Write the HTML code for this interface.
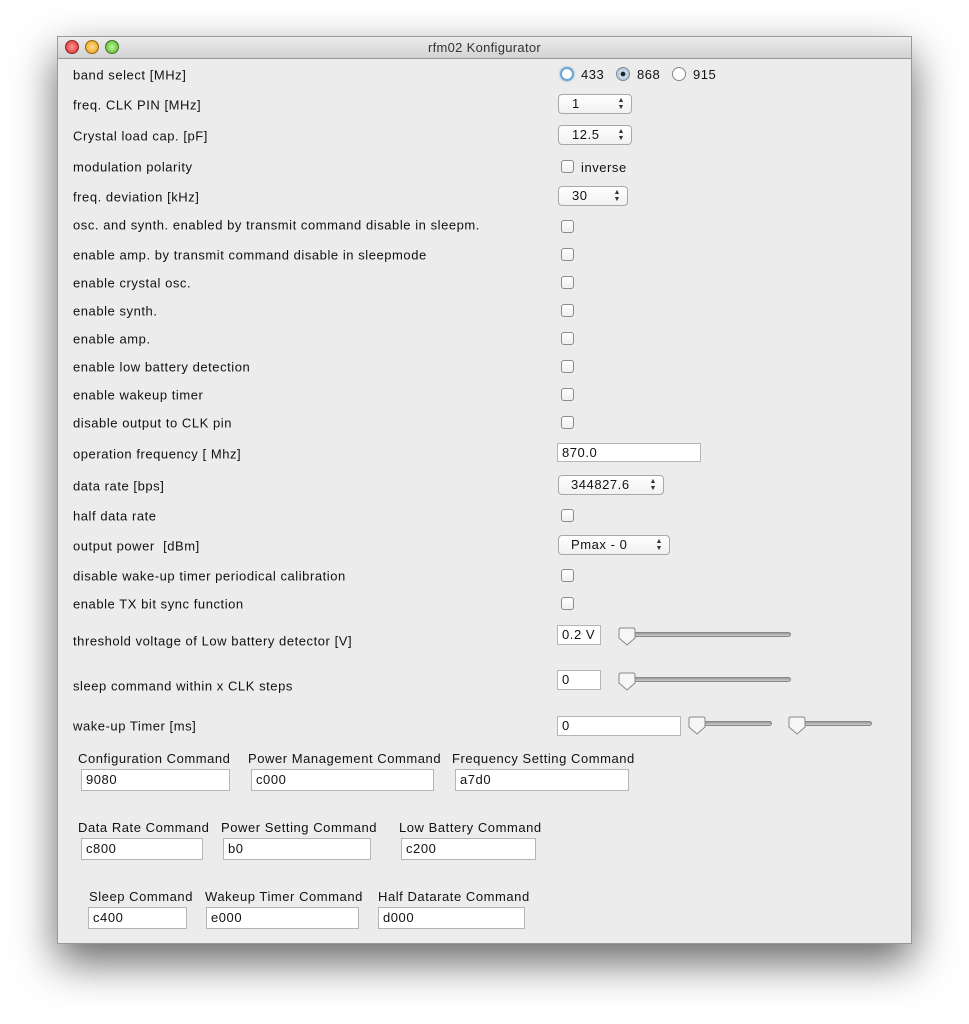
<!DOCTYPE html>
<html><head><style>
body{margin:0;width:969px;height:1024px;background:#fff;position:relative;overflow:hidden;font-family:"Liberation Sans",sans-serif;font-size:13px;color:#111;letter-spacing:0.55px}
.win{position:absolute;left:57px;top:36px;width:855px;height:908px;background:#ececec;box-shadow:0 18px 40px rgba(0,0,0,.6);border:1px solid #999;box-sizing:border-box}
.tb{position:absolute;left:0;top:0;width:100%;height:21px;background:linear-gradient(#ececec,#d3d3d3);border-bottom:1px solid #999;text-align:center;line-height:21px;font-size:13px;color:#333;letter-spacing:0.3px}
.dot{position:absolute;top:3px;width:12px;height:12px;border-radius:50%;border:1px solid rgba(0,0,0,.4)}
.a{position:absolute;white-space:nowrap}
.l{position:absolute;left:73px;white-space:nowrap;transform:translateY(-50%);margin-top:1px}
.cb{position:absolute;left:561px;width:13px;height:13px;border:1px solid #8c8c8c;border-radius:3px;background:linear-gradient(#fff,#f0f0f0);box-sizing:border-box}
.pop{position:absolute;left:558px;height:20px;border:1px solid #a8a8a8;border-radius:4px;background:linear-gradient(#fff,#f1f1f1);box-sizing:border-box;padding-left:13px;line-height:18px}
.ar{position:absolute;right:6px;top:2px;font-size:7px;line-height:7px;color:#333}
.tf{position:absolute;height:20px;border:1px solid #b5b5b5;background:#fff;box-sizing:border-box;padding-left:4px;line-height:18px}
.tr{position:absolute;height:5px;border-radius:3px;background:linear-gradient(#999,#ccc);border:1px solid #888;box-sizing:border-box}
.th{position:absolute;width:18px;height:20px}
.rad{position:absolute;top:67px;width:14px;height:14px;border-radius:50%;border:1px solid #888;background:#fff;box-sizing:border-box}
</style></head><body>
<div class="win">
<div class="tb">rfm02 Konfigurator
<div class="dot" style="left:7px;background:radial-gradient(#f99,#d22)"></div>
<div class="dot" style="left:27px;background:radial-gradient(#fd9,#e90)"></div>
<div class="dot" style="left:47px;background:radial-gradient(#bf9,#5a2)"></div>
</div>
</div>
<div class="l" style="top:74px">band select [MHz]</div>
<div class="l" style="top:104px">freq. CLK PIN [MHz]</div>
<div class="l" style="top:135px">Crystal load cap. [pF]</div>
<div class="l" style="top:166px">modulation polarity</div>
<div class="l" style="top:196px">freq. deviation [kHz]</div>
<div class="l" style="top:224px">osc. and synth. enabled by transmit command disable in sleepm.</div>
<div class="l" style="top:254px">enable amp. by transmit command disable in sleepmode</div>
<div class="l" style="top:282px">enable crystal osc.</div>
<div class="l" style="top:310px">enable synth.</div>
<div class="l" style="top:338px">enable amp.</div>
<div class="l" style="top:366px">enable low battery detection</div>
<div class="l" style="top:394px">enable wakeup timer</div>
<div class="l" style="top:422px">disable output to CLK pin</div>
<div class="l" style="top:453px">operation frequency [ Mhz]</div>
<div class="l" style="top:485px">data rate [bps]</div>
<div class="l" style="top:515px">half data rate</div>
<div class="l" style="top:545px">output power &nbsp;[dBm]</div>
<div class="l" style="top:575px">disable wake-up timer periodical calibration</div>
<div class="l" style="top:603px">enable TX bit sync function</div>
<div class="l" style="top:640px">threshold voltage of Low battery detector [V]</div>
<div class="l" style="top:685px">sleep command within x CLK steps</div>
<div class="l" style="top:725px">wake-up Timer [ms]</div>

<div class="rad" style="left:560px;border:2px solid #6fa4d8;box-shadow:0 0 2px #7ab"></div><div class="a" style="left:581px;top:67px">433</div>
<div class="rad" style="left:616px;background:radial-gradient(#222 25%,#cde 30%,#9bd)"></div><div class="a" style="left:637px;top:67px">868</div>
<div class="rad" style="left:672px"></div><div class="a" style="left:693px;top:67px">915</div>

<div class="pop" style="top:94px;width:74px">1<span class="ar">▲<br>▼</span></div>
<div class="pop" style="top:125px;width:74px">12.5<span class="ar">▲<br>▼</span></div>
<div class="cb" style="top:160px"></div><div class="a" style="left:581px;top:160px">inverse</div>
<div class="pop" style="top:186px;width:70px">30<span class="ar">▲<br>▼</span></div>
<div class="cb" style="top:220px"></div><div class="cb" style="top:248px"></div><div class="cb" style="top:276px"></div><div class="cb" style="top:304px"></div><div class="cb" style="top:332px"></div><div class="cb" style="top:360px"></div><div class="cb" style="top:388px"></div><div class="cb" style="top:416px"></div>
<div class="tf" style="left:557px;top:443px;width:144px;height:19px">870.0</div>
<div class="pop" style="top:475px;width:106px;padding-left:12px">344827.6<span class="ar">▲<br>▼</span></div>
<div class="cb" style="top:509px"></div>
<div class="pop" style="top:535px;width:112px;padding-left:12px">Pmax - 0<span class="ar">▲<br>▼</span></div>
<div class="cb" style="top:569px"></div><div class="cb" style="top:597px"></div>

<div class="tf" style="left:557px;top:625px;width:44px">0.2 V</div>
<div class="tr" style="left:622px;top:632px;width:169px"></div>
<div class="tf" style="left:557px;top:670px;width:44px">0</div>
<div class="tr" style="left:622px;top:677px;width:169px"></div>
<div class="tf" style="left:557px;top:716px;width:124px">0</div>
<div class="tr" style="left:692px;top:721px;width:80px"></div>
<div class="tr" style="left:792px;top:721px;width:80px"></div>
<svg class="th" style="left:618px;top:627px" viewBox="0 0 18 20"><path d="M1 3Q1 1 3 1H15Q17 1 17 3V11L9 18L1 11Z" fill="#f6f6f6" stroke="#888"/></svg>
<svg class="th" style="left:618px;top:672px" viewBox="0 0 18 20"><path d="M1 3Q1 1 3 1H15Q17 1 17 3V11L9 18L1 11Z" fill="#f6f6f6" stroke="#888"/></svg>
<svg class="th" style="left:688px;top:716px" viewBox="0 0 18 20"><path d="M1 3Q1 1 3 1H15Q17 1 17 3V11L9 18L1 11Z" fill="#f6f6f6" stroke="#888"/></svg>
<svg class="th" style="left:788px;top:716px" viewBox="0 0 18 20"><path d="M1 3Q1 1 3 1H15Q17 1 17 3V11L9 18L1 11Z" fill="#f6f6f6" stroke="#888"/></svg>

<div class="a" style="left:78px;top:751px">Configuration Command</div>
<div class="a" style="left:248px;top:751px">Power Management Command</div>
<div class="a" style="left:452px;top:751px">Frequency Setting Command</div>
<div class="tf" style="left:81px;top:769px;width:149px;height:22px;line-height:20px">9080</div>
<div class="tf" style="left:251px;top:769px;width:183px;height:22px;line-height:20px">c000</div>
<div class="tf" style="left:455px;top:769px;width:174px;height:22px;line-height:20px">a7d0</div>

<div class="a" style="left:78px;top:820px">Data Rate Command</div>
<div class="a" style="left:221px;top:820px">Power Setting Command</div>
<div class="a" style="left:399px;top:820px">Low Battery Command</div>
<div class="tf" style="left:81px;top:838px;width:122px;height:22px;line-height:20px">c800</div>
<div class="tf" style="left:223px;top:838px;width:148px;height:22px;line-height:20px">b0</div>
<div class="tf" style="left:401px;top:838px;width:135px;height:22px;line-height:20px">c200</div>

<div class="a" style="left:89px;top:889px">Sleep Command</div>
<div class="a" style="left:205px;top:889px">Wakeup Timer Command</div>
<div class="a" style="left:378px;top:889px">Half Datarate Command</div>
<div class="tf" style="left:88px;top:907px;width:99px;height:22px;line-height:20px">c400</div>
<div class="tf" style="left:206px;top:907px;width:153px;height:22px;line-height:20px">e000</div>
<div class="tf" style="left:378px;top:907px;width:147px;height:22px;line-height:20px">d000</div>
</body></html>
